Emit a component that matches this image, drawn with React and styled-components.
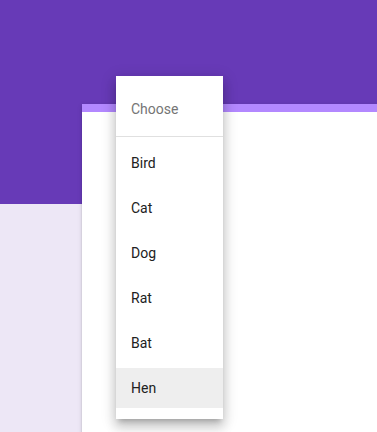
import React from "react";
import styled, { createGlobalStyle } from "styled-components";

const GlobalStyle = createGlobalStyle`
  html, body {
    margin: 0;
    padding: 0;
    height: 100%;
    overflow: hidden;
  }
  body {
    font-family: Roboto, "Liberation Sans", Arial, sans-serif;
    background: #ede7f6;
  }
`;

const Page = styled.div`
  width: 100%;
  height: 432px;
  overflow: hidden;
  background: #ede7f6;
`;

const Header = styled.div`
  height: 204px;
  background: #673ab7;
`;

const Card = styled.div`
  position: relative;
  margin: -100px -20px 0 82px;
  height: 400px;
  background: #fff;
  border-top: 8px solid #b388ff;
  box-shadow: 0 2px 2px rgba(0, 0, 0, 0.14), 0 1px 5px rgba(0, 0, 0, 0.12),
    0 3px 1px -2px rgba(0, 0, 0, 0.2);
`;

const Menu = styled.div`
  position: absolute;
  left: 34px;
  top: -36px;
  width: 107px;
  padding: 13px 0 11px;
  background: #fff;
  box-shadow: 0 5px 5px -3px rgba(0, 0, 0, 0.2), 0 8px 10px 1px rgba(0, 0, 0, 0.14),
    0 3px 14px 2px rgba(0, 0, 0, 0.12);
  z-index: 2;
`;

const Option = styled.div`
  height: 40px;
  display: flex;
  align-items: center;
  padding: 0 15px;
  font-size: 14px;
  color: ${(p) => (p.$placeholder ? "#757575" : "#212121")};
  background: ${(p) => (p.$active ? "#eeeeee" : "transparent")};
`;

const Divider = styled.div`
  height: 1px;
  background: #e0e0e0;
  margin-top: 7px;
`;

const OptionList = styled.div`
  display: flex;
  flex-direction: column;
  gap: 5px;
  margin-top: 6px;
`;

const animals = ["Bird", "Cat", "Dog", "Rat", "Bat", "Hen"];

export default function App() {
  return (
    <Page>
      <GlobalStyle />
      <Header />
      <Card>
        <Menu>
          <Option $placeholder>Choose</Option>
          <Divider />
          <OptionList>
            {animals.map((a) => (
              <Option key={a} $active={a === "Hen"}>
                {a}
              </Option>
            ))}
          </OptionList>
        </Menu>
      </Card>
    </Page>
  );
}
